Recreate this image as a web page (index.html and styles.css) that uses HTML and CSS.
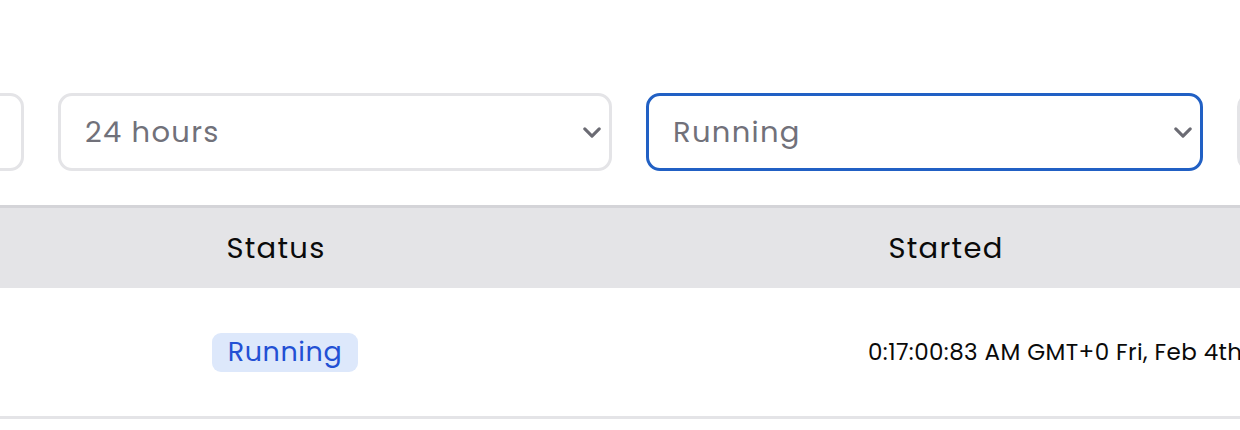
FILE: index.html
```html
<!DOCTYPE html>
<html lang="en">
<head>
<meta charset="utf-8">
<title>Runs</title>
<link rel="stylesheet" href="styles.css">
</head>
<body>
<div class="page">
  <div class="filters">
    <div class="select"></div>
    <div class="select"><span class="select-text">24 hours</span><svg class="chev" viewBox="0 0 20 12"><path d="M2 2 L10 10 L18 2" /></svg></div>
    <div class="select select-wide select-focus"><span class="select-text">Running</span><svg class="chev" viewBox="0 0 20 12"><path d="M2 2 L10 10 L18 2" /></svg></div>
    <div class="select"></div>
  </div>
  <div class="table">
    <div class="row head">
      <div class="cell th">Status</div>
      <div class="cell th">Started</div>
    </div>
    <div class="row body-row">
      <div class="cell td status-cell"><span class="badge">Running</span></div>
      <div class="cell td date-cell">0:17:00:83 AM GMT+0 Fri, Feb 4th 2022</div>
    </div>
  </div>
</div>
</body>
</html>
```

FILE: styles.css
```css
html, body {
  margin: 0;
  padding: 0;
  background: #ffffff;
  overflow: hidden;
}
body {
  width: 1240px;
  height: 430px;
  font-family: "Poppins", "DejaVu Sans", "Open Sans", sans-serif;
  color: #111111;
}
.page {
  width: 1240px;
  height: 430px;
  overflow: hidden;
}
.filters {
  display: flex;
  gap: 34px;
  margin-left: -530px;
  padding-top: 93px;
  width: 2400px;
}
.select {
  flex: 0 0 auto;
  box-sizing: border-box;
  width: 554px;
  height: 78px;
  border: 3px solid #e4e4e7;
  border-radius: 14px;
  display: flex;
  align-items: center;
  justify-content: space-between;
  padding: 0 8px 0 24px;
  background: #fff;
}
.select-wide {
  width: 557px;
}
.select-focus {
  border-color: #2160c4;
}
.select-text {
  font-size: 29px;
  color: #71717a;
  letter-spacing: 1.3px;
}
.chev {
  width: 18px;
  height: 11px;
  fill: none;
  stroke: #6b6b73;
  stroke-width: 3.4;
  stroke-linecap: round;
  stroke-linejoin: round;
}
.table {
  margin-top: 34px;
  margin-left: -59px;
  width: 1340px;
}
.row {
  display: grid;
  grid-template-columns: 670px 670px;
}
.head {
  border-top: 3px solid #d4d4d8;
  background: #e4e4e7;
  height: 80px;
}
.th {
  display: flex;
  align-items: center;
  justify-content: center;
  font-size: 29px;
  letter-spacing: 1.3px;
  color: #0a0a0a;
}
.body-row {
  height: 128px;
  border-bottom: 3px solid #e4e4e7;
}
.td {
  display: flex;
  align-items: center;
}
.status-cell {
  padding-left: 271px;
}
.date-cell {
  padding-left: 257px;
  font-size: 23px;
  letter-spacing: 0.4px;
  white-space: nowrap;
  color: #0a0a0a;
}
.badge {
  display: inline-flex;
  align-items: center;
  justify-content: center;
  box-sizing: border-box;
  width: 146px;
  height: 39px;
  background: #dde8fb;
  color: #2350d4;
  border-radius: 9px;
  font-size: 27px;
  letter-spacing: 0.6px;
}
```
